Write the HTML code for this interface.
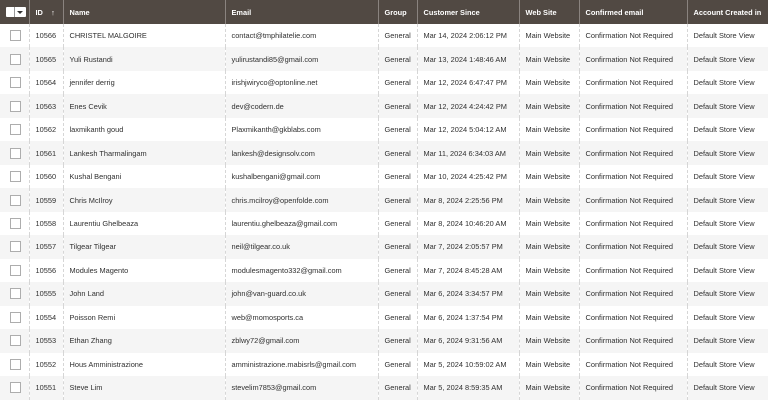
<!DOCTYPE html>
<html><head><meta charset="utf-8"><style>
body{margin:0;width:768px;height:400px;overflow:hidden;background:#fff;font-family:"Liberation Sans",sans-serif;}
table{border-collapse:collapse;table-layout:fixed;width:768px;font-size:7.4px;color:#303030;}
th{background:#514943;color:#fff;font-weight:bold;text-align:left;height:24px;padding:0 0 0 6px;border-left:1px solid #8a837f;box-sizing:border-box;}
th:first-child{border-left:none}
td{height:23.47px;padding:0 0 0 6px;border-left:1px dashed #d6d6d6;white-space:nowrap;overflow:hidden;box-sizing:border-box;}
td:first-child{border-left:none}
tr:nth-child(even) td{background:#f5f5f5}
.cb{display:inline-block;width:9px;height:9px;border:1px solid #adadad;background:#fff;margin-left:4px;vertical-align:middle}
.mcb{display:inline-block;width:20px;height:10px;background:#fff;border-radius:1px;position:relative;vertical-align:middle;margin-left:0px}
.mcb:after{content:"";position:absolute;left:8px;top:0;width:1px;height:10px;background:#999}
.mcb:before{content:"";position:absolute;right:3px;top:4px;border-left:3px solid transparent;border-right:3px solid transparent;border-top:3px solid #333}
</style></head><body>
<table>
<colgroup><col style="width:29px"><col style="width:34px"><col style="width:162px"><col style="width:153px"><col style="width:39px"><col style="width:102px"><col style="width:60px"><col style="width:108px"><col style="width:81px"></colgroup>
<thead><tr><th style="padding-left:6px"><span class="mcb"></span></th><th>ID&nbsp;&nbsp;&nbsp;&nbsp;↑</th><th>Name</th><th>Email</th><th>Group</th><th>Customer Since</th><th>Web Site</th><th>Confirmed email</th><th>Account Created in</th></tr></thead>
<tbody>
<tr><td><span class="cb"></span></td><td>10566</td><td>CHRISTEL MALGOIRE</td><td>contact@tmphilatelie.com</td><td>General</td><td>Mar 14, 2024 2:06:12 PM</td><td>Main Website</td><td>Confirmation Not Required</td><td>Default Store View</td></tr>
<tr><td><span class="cb"></span></td><td>10565</td><td>Yuli Rustandi</td><td>yulirustandi85@gmail.com</td><td>General</td><td>Mar 13, 2024 1:48:46 AM</td><td>Main Website</td><td>Confirmation Not Required</td><td>Default Store View</td></tr>
<tr><td><span class="cb"></span></td><td>10564</td><td>jennifer derrig</td><td>irishjwiryco@optonline.net</td><td>General</td><td>Mar 12, 2024 6:47:47 PM</td><td>Main Website</td><td>Confirmation Not Required</td><td>Default Store View</td></tr>
<tr><td><span class="cb"></span></td><td>10563</td><td>Enes Cevik</td><td>dev@codern.de</td><td>General</td><td>Mar 12, 2024 4:24:42 PM</td><td>Main Website</td><td>Confirmation Not Required</td><td>Default Store View</td></tr>
<tr><td><span class="cb"></span></td><td>10562</td><td>laxmikanth goud</td><td>Plaxmikanth@gkblabs.com</td><td>General</td><td>Mar 12, 2024 5:04:12 AM</td><td>Main Website</td><td>Confirmation Not Required</td><td>Default Store View</td></tr>
<tr><td><span class="cb"></span></td><td>10561</td><td>Lankesh Tharmalingam</td><td>lankesh@designsolv.com</td><td>General</td><td>Mar 11, 2024 6:34:03 AM</td><td>Main Website</td><td>Confirmation Not Required</td><td>Default Store View</td></tr>
<tr><td><span class="cb"></span></td><td>10560</td><td>Kushal Bengani</td><td>kushalbengani@gmail.com</td><td>General</td><td>Mar 10, 2024 4:25:42 PM</td><td>Main Website</td><td>Confirmation Not Required</td><td>Default Store View</td></tr>
<tr><td><span class="cb"></span></td><td>10559</td><td>Chris McIlroy</td><td>chris.mcilroy@openfolde.com</td><td>General</td><td>Mar 8, 2024 2:25:56 PM</td><td>Main Website</td><td>Confirmation Not Required</td><td>Default Store View</td></tr>
<tr><td><span class="cb"></span></td><td>10558</td><td>Laurentiu Ghelbeaza</td><td>laurentiu.ghelbeaza@gmail.com</td><td>General</td><td>Mar 8, 2024 10:46:20 AM</td><td>Main Website</td><td>Confirmation Not Required</td><td>Default Store View</td></tr>
<tr><td><span class="cb"></span></td><td>10557</td><td>Tilgear Tilgear</td><td>neil@tilgear.co.uk</td><td>General</td><td>Mar 7, 2024 2:05:57 PM</td><td>Main Website</td><td>Confirmation Not Required</td><td>Default Store View</td></tr>
<tr><td><span class="cb"></span></td><td>10556</td><td>Modules Magento</td><td>modulesmagento332@gmail.com</td><td>General</td><td>Mar 7, 2024 8:45:28 AM</td><td>Main Website</td><td>Confirmation Not Required</td><td>Default Store View</td></tr>
<tr><td><span class="cb"></span></td><td>10555</td><td>John Land</td><td>john@van-guard.co.uk</td><td>General</td><td>Mar 6, 2024 3:34:57 PM</td><td>Main Website</td><td>Confirmation Not Required</td><td>Default Store View</td></tr>
<tr><td><span class="cb"></span></td><td>10554</td><td>Poisson Remi</td><td>web@momosports.ca</td><td>General</td><td>Mar 6, 2024 1:37:54 PM</td><td>Main Website</td><td>Confirmation Not Required</td><td>Default Store View</td></tr>
<tr><td><span class="cb"></span></td><td>10553</td><td>Ethan Zhang</td><td>zblwy72@gmail.com</td><td>General</td><td>Mar 6, 2024 9:31:56 AM</td><td>Main Website</td><td>Confirmation Not Required</td><td>Default Store View</td></tr>
<tr><td><span class="cb"></span></td><td>10552</td><td>Hous Amministrazione</td><td>amministrazione.mabisrls@gmail.com</td><td>General</td><td>Mar 5, 2024 10:59:02 AM</td><td>Main Website</td><td>Confirmation Not Required</td><td>Default Store View</td></tr>
<tr><td><span class="cb"></span></td><td>10551</td><td>Steve Lim</td><td>stevelim7853@gmail.com</td><td>General</td><td>Mar 5, 2024 8:59:35 AM</td><td>Main Website</td><td>Confirmation Not Required</td><td>Default Store View</td></tr>
</tbody></table>
</body></html>
